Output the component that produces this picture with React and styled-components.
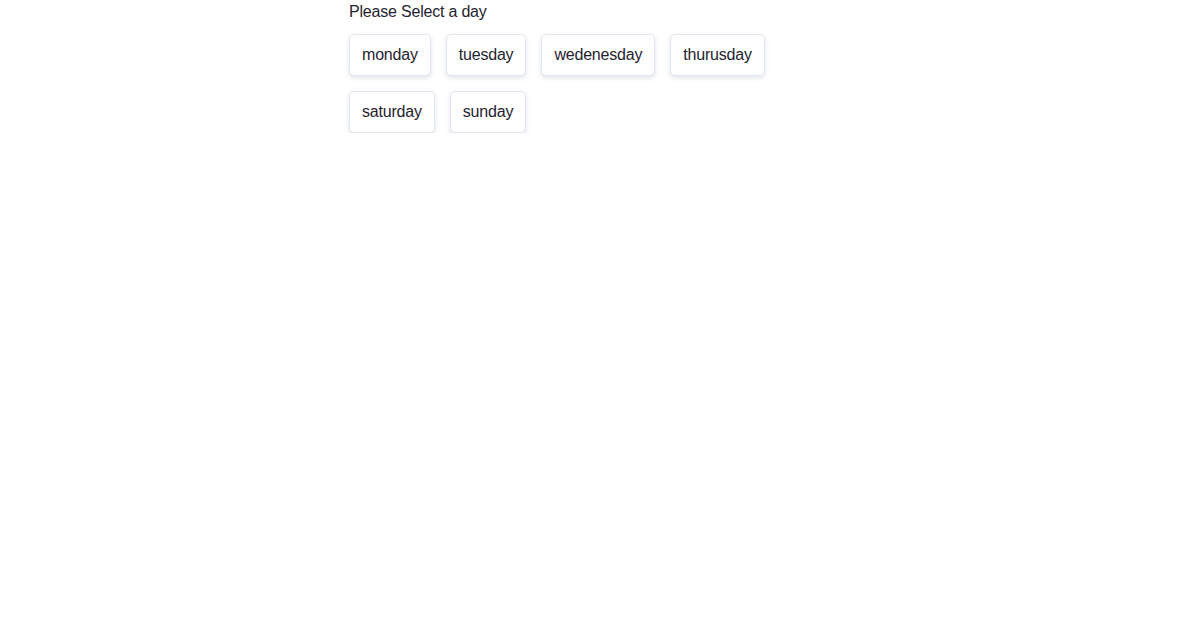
import React from 'react';
import styled, { createGlobalStyle } from 'styled-components';

const GlobalStyle = createGlobalStyle`
    body {
        margin: 0;
        background: #ffffff;
        font-family: "Liberation Sans", Arial, sans-serif;
        color: #1f2330;
    }
`;

const days = ['monday', 'tuesday', 'wedenesday', 'thurusday', 'saturday', 'sunday'];

const App = () => {
    return (
        <>
            <GlobalStyle />
            <Container>
                <Title>Please Select a day</Title>
                <DayList>
                    {days.map((day) => (
                        <DayButton key={day} type="button">{day}</DayButton>
                    ))}
                </DayList>
            </Container>
        </>
    );
};

const Container = styled.div`
    width: 502px;
    margin: 0 auto;
`;

const Title = styled.p`
    margin: 0 0 10px;
    font-size: 16px;
    letter-spacing: -0.2px;
    line-height: 24px;
`;

const DayList = styled.div`
    display: flex;
    flex-wrap: wrap;
    column-gap: 15px;
    row-gap: 15px;
    width: 430px;
`;

const DayButton = styled.button`
    height: 42px;
    padding: 0 12px;
    background: #ffffff;
    border: 1px solid #e1e6ef;
    border-radius: 5px;
    box-shadow: 0 2px 5px rgba(40, 55, 95, 0.14);
    font-family: "Liberation Sans", Arial, sans-serif;
    font-size: 16px;
    letter-spacing: -0.2px;
    color: #1f2330;
    cursor: pointer;
`;

export default App;
